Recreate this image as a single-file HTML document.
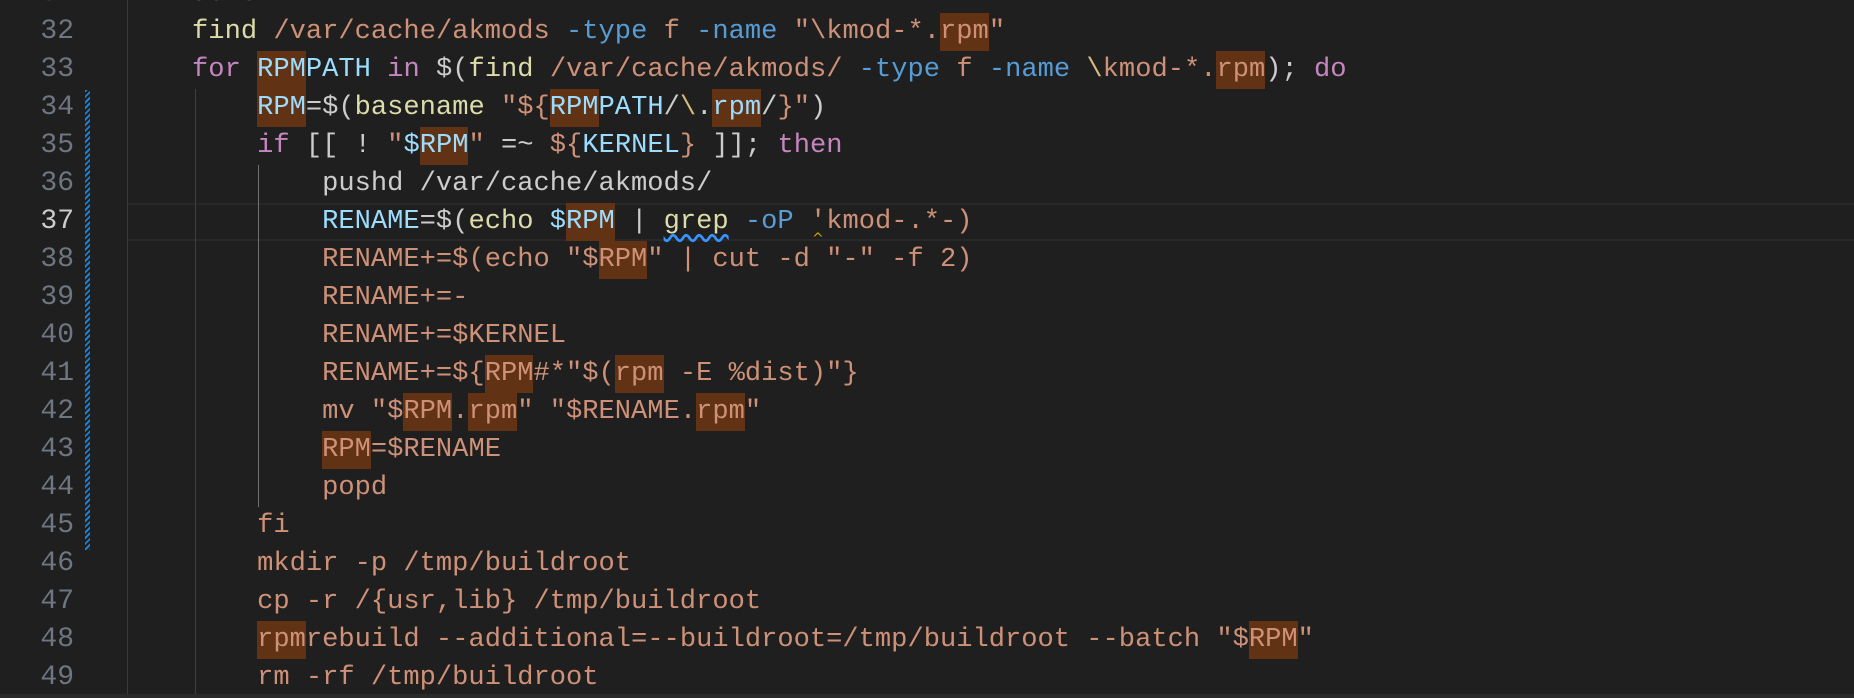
<!DOCTYPE html>
<html><head><meta charset="utf-8"><style>
html,body{margin:0;padding:0;background:#1f1f1f;width:1854px;height:698px;overflow:hidden;position:relative}
.ln{position:absolute;font:28px "Liberation Mono",monospace;color:#6e7681;height:38px;line-height:38px;text-align:right;width:60px;left:14px}
.ln.a{color:#cccccc}
.l{position:absolute;left:127px;font:27.1px "Liberation Mono",monospace;height:38px;line-height:38px;white-space:pre;color:#cccccc}
.o{color:#ce9178}.y{color:#dcdcaa}.b{color:#569cd6}.v{color:#9cdcfe}.p{color:#c586c0}.e{color:#d7ba7d}
.h{background:#613214;display:inline-block;height:38px}
.g{position:absolute;width:1px;background:#404040}
.diff{position:absolute;left:85px;width:5px;background:repeating-linear-gradient(135deg,#1b81d8 0 2px,transparent 2px 4px)}
</style></head><body>
<div style="position:absolute;left:127px;top:0;width:1px;height:698px;background:#3a3a3a"></div>
<div style="position:absolute;left:128px;top:203px;width:1726px;height:38px;box-sizing:border-box;border-top:2px solid #282828;border-bottom:2px solid #282828"></div>
<div class="g" style="left:195px;top:89px;height:609px"></div>
<div class="g" style="left:258px;top:165px;height:342px;background:#707070"></div>
<div class="diff" style="top:90px;height:460px"></div>
<div style="position:absolute;left:0;top:694px;width:1854px;height:4px;background:#2a2a2a"></div>

<div class="ln" style="top:-25px">31</div>
<div class="ln" style="top:13px">32</div>
<div class="ln" style="top:51px">33</div>
<div class="ln" style="top:89px">34</div>
<div class="ln" style="top:127px">35</div>
<div class="ln" style="top:165px">36</div>
<div class="ln a" style="top:203px">37</div>
<div class="ln" style="top:241px">38</div>
<div class="ln" style="top:279px">39</div>
<div class="ln" style="top:317px">40</div>
<div class="ln" style="top:355px">41</div>
<div class="ln" style="top:393px">42</div>
<div class="ln" style="top:431px">43</div>
<div class="ln" style="top:469px">44</div>
<div class="ln" style="top:507px">45</div>
<div class="ln" style="top:545px">46</div>
<div class="ln" style="top:583px">47</div>
<div class="ln" style="top:621px">48</div>
<div class="ln" style="top:659px">49</div>

<div class="l" style="top:-25px">    <span class="p">done</span></div>
<div class="l" style="top:13px">    <span class="y">find</span> <span class="o">/var/cache/akmods</span> <span class="b">-type</span> <span class="o">f</span> <span class="b">-name</span> <span class="o">"\kmod-*.<span class="h">rpm</span>"</span></div>
<div class="l" style="top:51px">    <span class="p">for</span> <span class="v"><span class="h">RPM</span>PATH</span> <span class="p">in</span> $(<span class="y">find</span> <span class="o">/var/cache/akmods/</span> <span class="b">-type</span> <span class="o">f</span> <span class="b">-name</span> <span class="e">\</span><span class="o">kmod-*.<span class="h">rpm</span></span>); <span class="p">do</span></div>
<div class="l" style="top:89px">        <span class="v"><span class="h">RPM</span></span>=$(<span class="y">basename</span> <span class="o">"${</span><span class="v"><span class="h">RPM</span>PATH</span>/<span class="e">\</span>.<span class="v"><span class="h">rpm</span></span>/<span class="o">}"</span>)</div>
<div class="l" style="top:127px">        <span class="p">if</span> [[ ! <span class="o">"</span><span class="v">$<span class="h">RPM</span></span><span class="o">"</span> =~ <span class="o">${</span><span class="v">KERNEL</span><span class="o">}</span> ]]; <span class="p">then</span></div>
<div class="l" style="top:165px">            pushd /var/cache/akmods/</div>
<div class="l" style="top:203px">            <span class="v">RENAME</span>=$(<span class="y">echo</span> <span class="v">$<span class="h">RPM</span></span> | <span class="y" style="text-decoration:underline wavy #3794ff;text-underline-offset:6px">grep</span> <span class="b">-oP</span> <span class="o">'kmod-.*-)</span></div>
<div class="l o" style="top:241px">            RENAME+=$(echo "$<span class="h">RPM</span>" | cut -d "-" -f 2)</div>
<div class="l o" style="top:279px">            RENAME+=-</div>
<div class="l o" style="top:317px">            RENAME+=$KERNEL</div>
<div class="l o" style="top:355px">            RENAME+=${<span class="h">RPM</span>#*"$(<span class="h">rpm</span> -E %dist)"}</div>
<div class="l o" style="top:393px">            mv "$<span class="h">RPM</span>.<span class="h">rpm</span>" "$RENAME.<span class="h">rpm</span>"</div>
<div class="l o" style="top:431px">            <span class="h">RPM</span>=$RENAME</div>
<div class="l o" style="top:469px">            popd</div>
<div class="l o" style="top:507px">        fi</div>
<div class="l o" style="top:545px">        mkdir -p /tmp/buildroot</div>
<div class="l o" style="top:583px">        cp -r /{usr,lib} /tmp/buildroot</div>
<div class="l o" style="top:621px">        <span class="h">rpm</span>rebuild --additional=--buildroot=/tmp/buildroot --batch "$<span class="h">RPM</span>"</div>
<div class="l o" style="top:659px">        rm -rf /tmp/buildroot</div>
<div style="position:absolute;left:812px;top:231px;color:#cca700;font:14px 'DejaVu Sans',sans-serif">^</div>
</body></html>
